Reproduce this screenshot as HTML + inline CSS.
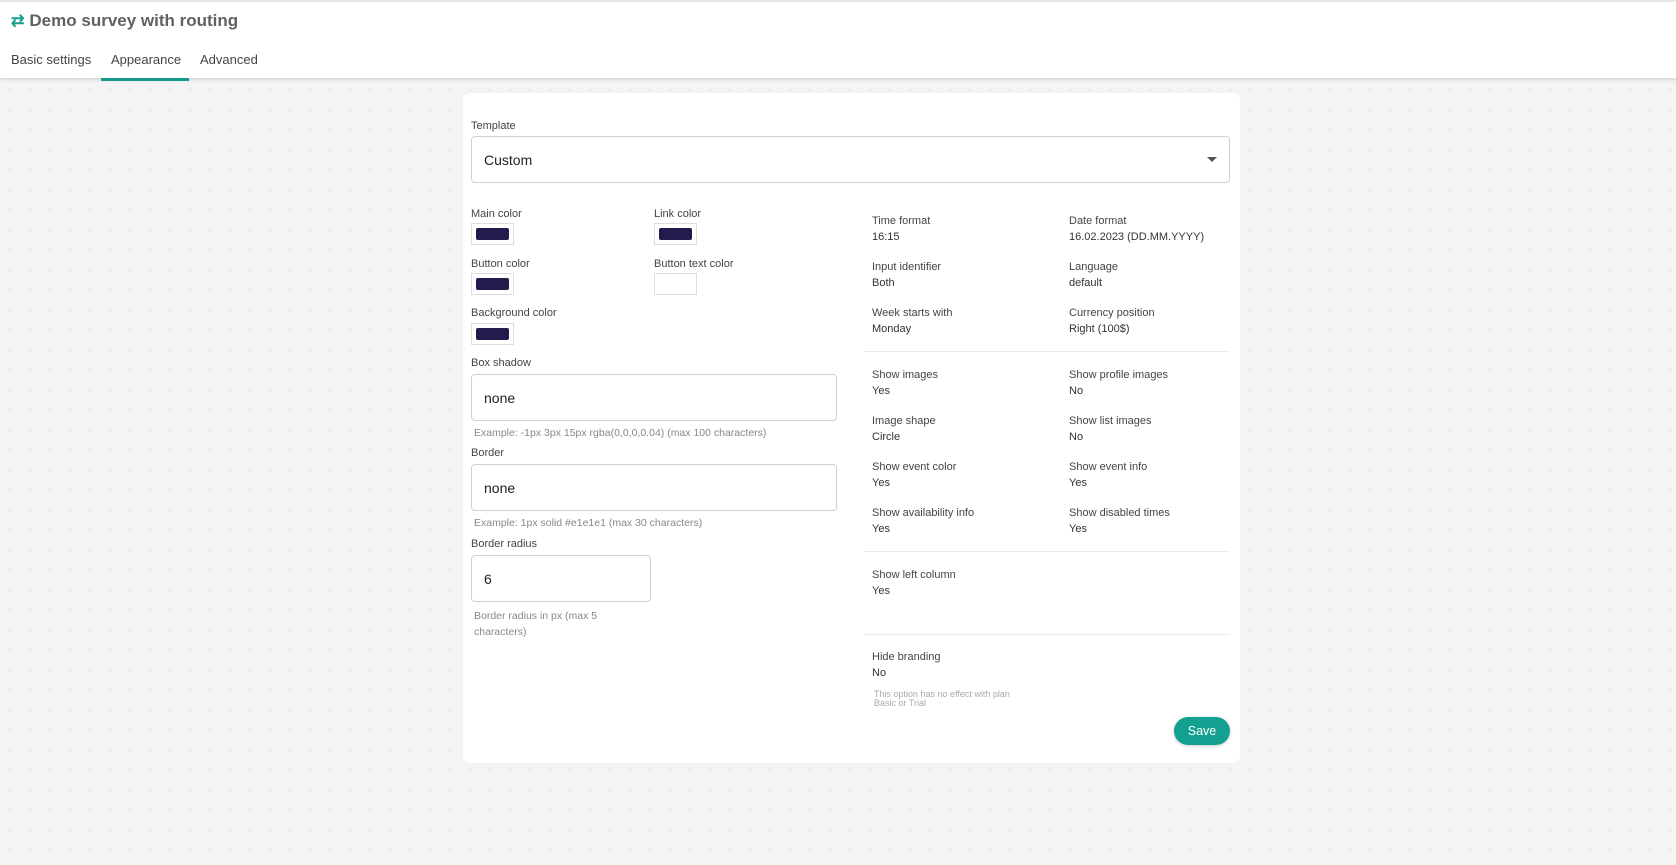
<!DOCTYPE html>
<html><head><meta charset="utf-8"><style>
*{box-sizing:border-box;margin:0;padding:0}
body{width:1676px;height:865px;overflow:hidden;font-family:"Liberation Sans",sans-serif;background-color:#f4f4f4;background-image:radial-gradient(#e2e2e2 1px,transparent 1.2px);background-size:20px 20px;position:relative;color:#333}
.hdr{position:absolute;left:0;top:0;width:1676px;height:78px;background:#fff;box-shadow:0 1px 4px rgba(0,0,0,.18);border-top:2px solid #e6e6e6}
.title{position:absolute;left:11px;top:9px;font-size:17px;color:#616161;font-weight:bold;letter-spacing:0}
.title span{color:#1a9e8f;font-size:16px;margin-right:5px}
.tab{position:absolute;top:50px;font-size:13px;color:#444}
.ul{position:absolute;left:101px;top:76px;width:88px;height:3px;background:#14998b}
.card{position:absolute;left:463px;top:93px;width:777px;height:670px;background:#fff;border-radius:8px}
.a{position:absolute;font-size:11px;color:#444;white-space:nowrap}
.v{position:absolute;font-size:11px;color:#333;white-space:nowrap}
.box{position:absolute;border:1px solid #d0d0d0;border-radius:4px;background:#fff;font-size:14px;color:#222;padding-left:12px;display:flex;align-items:center}
.sw{position:absolute;width:43px;height:22px;border:1px solid #ddd;background:#fff}
.sw i{position:absolute;left:4px;top:4px;width:33px;height:12px;background:#221b4d;border-radius:2px}
.h{position:absolute;font-size:10.5px;color:#888;white-space:nowrap}
.dv{position:absolute;left:401px;width:366px;height:1px;background:#ebebeb}
</style></head><body>
<div class="hdr">
<div class="title"><span>⇄</span>Demo survey with routing</div>
<div class="tab" style="left:11px">Basic settings</div>
<div class="tab" style="left:111px">Appearance</div>
<div class="tab" style="left:200px">Advanced</div>
<div class="ul"></div>
</div>
<div class="card">
<div class="a" style="left:8px;top:27px">Template</div>
<div class="box" style="left:8px;top:43px;width:759px;height:47px">Custom<span style="position:absolute;right:12px;top:20px;width:0;height:0;border-left:5px solid transparent;border-right:5px solid transparent;border-top:5px solid #555"></span></div>

<div class="a" style="left:8px;top:115px">Main color</div>
<div class="sw" style="left:8px;top:130px"><i></i></div>
<div class="a" style="left:191px;top:115px">Link color</div>
<div class="sw" style="left:191px;top:130px"><i></i></div>
<div class="a" style="left:8px;top:165px">Button color</div>
<div class="sw" style="left:8px;top:180px"><i></i></div>
<div class="a" style="left:191px;top:165px">Button text color</div>
<div class="sw" style="left:191px;top:180px"></div>
<div class="a" style="left:8px;top:214px">Background color</div>
<div class="sw" style="left:8px;top:230px"><i></i></div>

<div class="a" style="left:8px;top:264px">Box shadow</div>
<div class="box" style="left:8px;top:281px;width:366px;height:47px">none</div>
<div class="h" style="left:11px;top:334px">Example: -1px 3px 15px rgba(0,0,0,0.04) (max 100 characters)</div>
<div class="a" style="left:8px;top:354px">Border</div>
<div class="box" style="left:8px;top:371px;width:366px;height:47px">none</div>
<div class="h" style="left:11px;top:424px">Example: 1px solid &#35;e1e1e1 (max 30 characters)</div>
<div class="a" style="left:8px;top:445px">Border radius</div>
<div class="box" style="left:8px;top:462px;width:180px;height:47px">6</div>
<div class="h" style="left:11px;top:515px;line-height:16px">Border radius in px (max 5<br>characters)</div>

<div class="a" style="left:409px;top:122px">Time format</div><div class="v" style="left:409px;top:138px">16:15</div>
<div class="a" style="left:606px;top:122px">Date format</div><div class="v" style="left:606px;top:138px">16.02.2023 (DD.MM.YYYY)</div>
<div class="a" style="left:409px;top:168px">Input identifier</div><div class="v" style="left:409px;top:184px">Both</div>
<div class="a" style="left:606px;top:168px">Language</div><div class="v" style="left:606px;top:184px">default</div>
<div class="a" style="left:409px;top:214px">Week starts with</div><div class="v" style="left:409px;top:230px">Monday</div>
<div class="a" style="left:606px;top:214px">Currency position</div><div class="v" style="left:606px;top:230px">Right (100$)</div>
<div class="dv" style="top:258px"></div>
<div class="a" style="left:409px;top:276px">Show images</div><div class="v" style="left:409px;top:292px">Yes</div>
<div class="a" style="left:606px;top:276px">Show profile images</div><div class="v" style="left:606px;top:292px">No</div>
<div class="a" style="left:409px;top:322px">Image shape</div><div class="v" style="left:409px;top:338px">Circle</div>
<div class="a" style="left:606px;top:322px">Show list images</div><div class="v" style="left:606px;top:338px">No</div>
<div class="a" style="left:409px;top:368px">Show event color</div><div class="v" style="left:409px;top:384px">Yes</div>
<div class="a" style="left:606px;top:368px">Show event info</div><div class="v" style="left:606px;top:384px">Yes</div>
<div class="a" style="left:409px;top:414px">Show availability info</div><div class="v" style="left:409px;top:430px">Yes</div>
<div class="a" style="left:606px;top:414px">Show disabled times</div><div class="v" style="left:606px;top:430px">Yes</div>
<div class="dv" style="top:458px"></div>
<div class="a" style="left:409px;top:476px">Show left column</div><div class="v" style="left:409px;top:492px">Yes</div>
<div class="dv" style="top:541px"></div>
<div class="a" style="left:409px;top:558px">Hide branding</div><div class="v" style="left:409px;top:574px">No</div>
<div class="h" style="left:411px;top:597px;font-size:9px;color:#aaa;line-height:9px">This option has no effect with plan<br>Basic or Trial</div>
<div style="position:absolute;left:711px;top:624px;width:56px;height:28px;border-radius:14px;background:#14a090;color:#fff;font-size:12.5px;display:flex;align-items:center;justify-content:center;box-shadow:0 1px 3px rgba(0,0,0,.2)">Save</div>
</div>
</body></html>
